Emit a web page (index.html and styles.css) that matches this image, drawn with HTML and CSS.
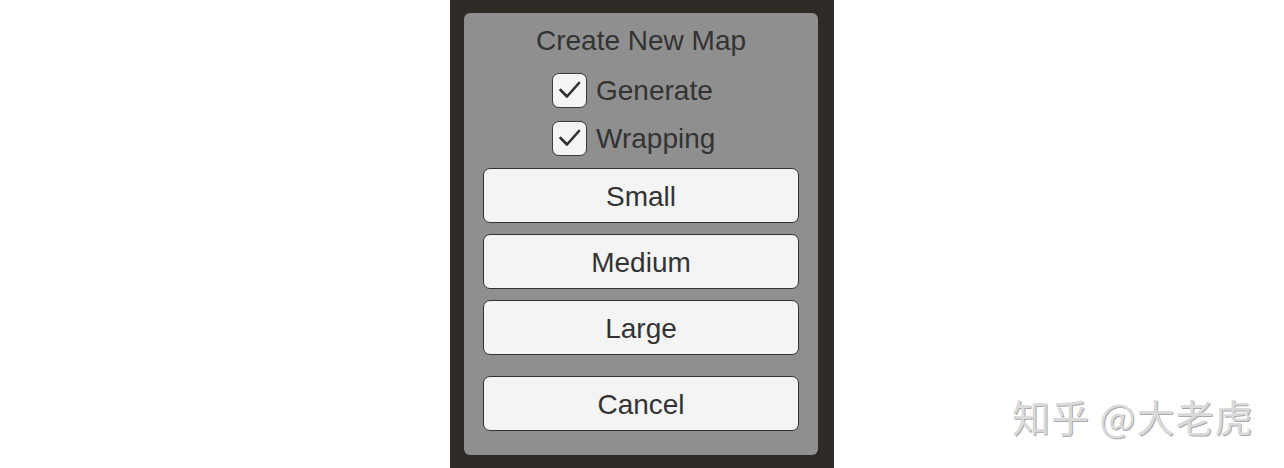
FILE: index.html
```html
<!DOCTYPE html>
<html>
<head>
<meta charset="utf-8">
<link rel="stylesheet" href="styles.css">
</head>
<body>
<div class="stage">
  <div class="frame">
    <div class="dialog">
      <div class="title">Create New Map</div>
      <div class="toggles">
        <label class="toggle">
          <span class="box"><svg width="34" height="34" viewBox="0 0 34 34"><polyline points="7.5,17 14,23.5 26,10" fill="none" stroke="#2e2e2e" stroke-width="2.6" stroke-linecap="round" stroke-linejoin="round"/></svg></span>
          <span class="label">Generate</span>
        </label>
        <label class="toggle">
          <span class="box"><svg width="34" height="34" viewBox="0 0 34 34"><polyline points="7.5,17 14,23.5 26,10" fill="none" stroke="#2e2e2e" stroke-width="2.6" stroke-linecap="round" stroke-linejoin="round"/></svg></span>
          <span class="label">Wrapping</span>
        </label>
      </div>
      <div class="buttons">
        <div class="btn">Small</div>
        <div class="btn">Medium</div>
        <div class="btn">Large</div>
        <div class="btn cancel">Cancel</div>
      </div>
    </div>
  </div>
  <div class="watermark">知乎 @大老虎</div>
</div>
</body>
</html>
```
FILE: styles.css
```css
html, body {
  margin: 0;
  padding: 0;
  background: #ffffff;
}
.stage {
  position: relative;
  width: 1284px;
  height: 468px;
  display: flex;
  justify-content: center;
  font-family: "Liberation Sans", Arial, sans-serif;
}
.frame {
  width: 384px;
  height: 468px;
  box-sizing: border-box;
  background: #2e2b26;
  padding: 13px 16px 13px 14px;
}
.dialog {
  height: 442px;
  box-sizing: border-box;
  background: #8f8f8f;
  border-radius: 6px;
  padding: 11px 19px 0 19px;
  display: flex;
  flex-direction: column;
  color: #333333;
}
.title {
  font-size: 28px;
  line-height: 34px;
  text-align: center;
  height: 34px;
}
.toggles {
  margin-top: 15px;
  padding-left: 69px;
  display: flex;
  flex-direction: column;
  gap: 14px;
}
.toggle {
  display: flex;
  align-items: center;
  height: 34px;
  gap: 9px;
}
.box {
  width: 35px;
  height: 35px;
  box-sizing: border-box;
  background: #f4f4f4;
  border: 1px solid #3a3a3a;
  border-radius: 7px;
  display: flex;
  align-items: center;
  justify-content: center;
}
.box svg {
  display: block;
  flex: none;
}
.label {
  font-size: 28px;
  line-height: 34px;
  padding-top: 1px;
  color: #333333;
}
.buttons {
  margin-top: 13px;
  display: flex;
  flex-direction: column;
  gap: 11px;
}
.btn {
  height: 55px;
  box-sizing: border-box;
  background: #f4f4f4;
  border: 1px solid #333333;
  border-radius: 7px;
  font-size: 28px;
  padding-top: 2px;
  display: flex;
  align-items: center;
  justify-content: center;
  color: #333333;
}
.btn.cancel {
  margin-top: 10px;
}
.watermark {
  position: absolute;
  left: 1012px;
  top: 393px;
  font-family: "Noto Sans CJK SC", "Liberation Sans", sans-serif;
  font-size: 38px;
  line-height: 46px;
  letter-spacing: 1px;
  color: #dadada;
  text-shadow: 1px 1px 0 #aaaaaa;
  white-space: nowrap;
}
```
